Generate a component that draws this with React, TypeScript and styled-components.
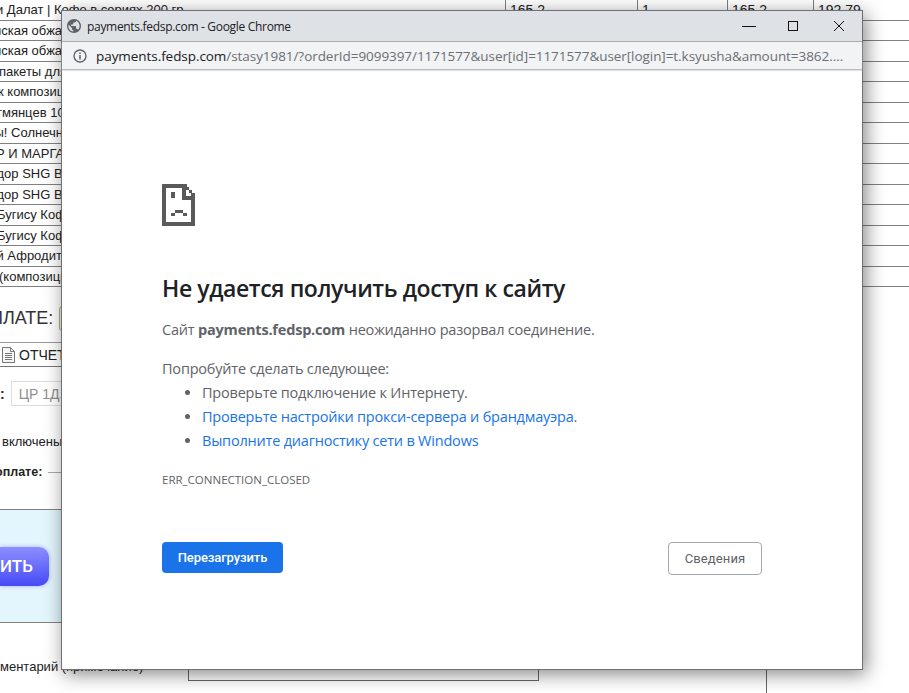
import styled, { createGlobalStyle } from "styled-components"

const GlobalStyle = createGlobalStyle`
    html, body {
        margin: 0;
        padding: 0;
        background: #fff;
    }
`

const Page = styled.div`
    position: relative;
    width: 909px;
    height: 693px;
    overflow: hidden;
    background: #fff;
    color: #222;
    font-family: "Liberation Sans", Arial, sans-serif;
    font-size: 13px;
`

/* page behind the popup */
const OrderTable = styled.div`
    display: flex;
    flex-direction: column;
    border-top: 1px solid #808080;
    margin-top: -1px;
`
const OrderRow = styled.div`
    display: grid;
    grid-template-columns: 505px 132px 90px 86px 96px;
    height: 20.5px;
    box-sizing: border-box;
    border-bottom: 1px solid #808080;
`
const NameCell = styled.div<{ $shift: number }>`
    margin-left: ${(p) => p.$shift}px;
    line-height: 20px;
    white-space: nowrap;
    overflow: hidden;
`
const ValueCell = styled.div`
    padding-left: 4px;
    line-height: 20px;
    font-size: 14px;
    border-left: 1px solid #808080;
`
const PayLine = styled.div`
    display: flex;
    align-items: center;
    gap: 6px;
    height: 25px;
    margin-top: 19px;
    margin-left: -10px;
    font-size: 18px;
    color: #333;
`
const PayInput = styled.div`
    width: 120px;
    height: 25px;
    box-sizing: border-box;
    background: #f5f1d8;
    border: 1px solid #b3ae8c;
    border-radius: 3px;
`
const ReportBar = styled.div`
    display: flex;
    align-items: center;
    gap: 3px;
    width: 300px;
    height: 25px;
    box-sizing: border-box;
    margin-top: 11px;
    padding-left: 1px;
    border-top: 1px solid #999;
    border-bottom: 1px solid #777;
    font-size: 14px;
    color: #222;
`
const FieldRow = styled.div`
    display: flex;
    align-items: center;
    gap: 6px;
    height: 25px;
    margin-top: 14px;
    font-size: 14px;
    font-weight: 700;
`
const FieldInput = styled.input`
    width: 200px;
    height: 25px;
    box-sizing: border-box;
    padding: 0 7px;
    border: 1px solid #ddd;
    font-family: inherit;
    font-size: 14px;

    &::placeholder {
        color: #8e8e8e;
    }
`
const IncludedLine = styled.div`
    margin-top: 28px;
    padding-left: 2px;
    line-height: 16px;
`
const PaidLine = styled.div`
    display: flex;
    align-items: center;
    gap: 6px;
    margin-top: 14px;
    margin-left: -5px;
    line-height: 16px;
    font-size: 12.5px;
    font-weight: 700;
`
const PaidDash = styled.div`
    width: 40px;
    height: 1px;
    background: #aaa;
`
const PayPanel = styled.div`
    display: flex;
    align-items: center;
    width: 500px;
    height: 114px;
    box-sizing: border-box;
    margin-top: 29px;
    background: #e3f5fd;
    border-top: 1px solid #808080;
    border-bottom: 1px solid #808080;
`
const PayButton = styled.div`
    display: flex;
    align-items: center;
    justify-content: flex-end;
    width: 49px;
    height: 39px;
    padding-right: 16px;
    box-sizing: border-box;
    border-radius: 0 10px 10px 0;
    background: linear-gradient(#8c8fff, #474af5);
    box-shadow: 0 0 4px #a9abff;
    color: #fff;
    font-size: 17px;
    font-weight: 500;
    font-family: Roboto, sans-serif;
    white-space: nowrap;
`
const CommentRow = styled.div`
    display: flex;
    height: 70px;
`
const CommentLabel = styled.div`
    width: 188px;
    flex: none;
    padding-top: 36px;
    line-height: 16px;
    white-space: nowrap;
`
const CommentBox = styled.div`
    width: 351px;
    height: 58px;
    flex: none;
    box-sizing: border-box;
    border: 1px solid #666;
`
const RightColumn = styled.div`
    width: 1px;
    height: 70px;
    flex: none;
    margin-left: 227px;
    background: #666;
`

/* popup window */
const ChromeWindow = styled.div`
    position: absolute;
    left: 61px;
    top: 10px;
    width: 802px;
    height: 660px;
    box-sizing: border-box;
    display: flex;
    flex-direction: column;
    background: #fff;
    border: 1px solid #6e7073;
    box-shadow: 3px 4px 18px rgba(0, 0, 0, 0.48);
    font-family: "Open Sans", sans-serif;
`
const TitleBar = styled.div`
    display: flex;
    align-items: center;
    height: 30px;
    flex: none;
    padding-left: 5px;
    background: #dee1e6;
    border-bottom: 1px solid #a8abaf;
    color: #202124;
`
const TitleText = styled.div`
    margin-left: 6px;
    font-size: 12px;
    letter-spacing: -0.31px;
    white-space: nowrap;
`
const WindowControls = styled.div`
    display: flex;
    align-items: center;
    gap: 36px;
    margin-left: auto;
    margin-right: 18px;
`
const MinimizeIcon = styled.svg`
    margin-right: -4px;
`
const AddressBar = styled.div`
    display: flex;
    align-items: center;
    height: 27px;
    flex: none;
    padding-left: 11px;
    background: #f1f3f4;
    border-bottom: 1px solid #b9bbbd;
    box-shadow: 0 1px 1px #e4e4e4;
`
const UrlText = styled.div`
    margin-left: 9px;
    font-size: 13.5px;
    letter-spacing: -0.06px;
    white-space: nowrap;
    color: #6b6f74;
`
const UrlHost = styled.span`
    color: #202124;
`
const ErrorBody = styled.div`
    display: flex;
    flex-direction: column;
    flex: 1;
    padding: 114px 100px 0 100px;
    color: #5f6368;
    font-size: 14.5px;
    letter-spacing: -0.2px;
`
const SadIcon = styled.svg`
    display: block;
    flex: none;
`
const Heading = styled.h1`
    margin: 45px 0 0;
    font-size: 23px;
    font-weight: 600;
    line-height: 34px;
    letter-spacing: -0.4px;
    color: #202124;
`
const Summary = styled.p`
    margin: 13px 0 0;
    line-height: 24px;
`
const SuggestTitle = styled.p`
    margin: 15px 0 0;
    line-height: 24px;
`
const SuggestList = styled.ul`
    margin: 0;
    padding-left: 40px;
    line-height: 24px;
`
const SuggestLink = styled.span`
    color: #1a73e8;
`
const ErrorCode = styled.div`
    margin-top: 18px;
    font-size: 11.5px;
    line-height: 18px;
    letter-spacing: 0;
`
const ActionRow = styled.div`
    display: flex;
    justify-content: space-between;
    align-items: flex-start;
    margin-top: 53px;
    font-family: Roboto, sans-serif;
`
const ReloadButton = styled.button`
    width: 121px;
    height: 31px;
    padding: 0;
    border: none;
    border-radius: 4px;
    background: #1a73e8;
    color: #fff;
    font-family: inherit;
    font-size: 13px;
    font-weight: 500;
    letter-spacing: -0.1px;
`
const DetailsButton = styled.button`
    width: 94px;
    height: 33px;
    padding: 0;
    border: 1px solid #a5a8ac;
    border-radius: 4px;
    background: #fff;
    color: #5f6368;
    font-family: inherit;
    font-size: 13px;
    font-weight: 400;
    letter-spacing: 0.1px;
`

const ROWS: [string, number][] = [
    ["и Далат | Кофе в сериях 200 гр", -4],
    ["иская обжарка", -6],
    ["иская обжарка", -6],
    ["пакеты для", -1],
    ["к композиции", -2],
    ["тмянцев 10", -4],
    ["ы! Солнечный", -5.5],
    ["Р И МАРГАРИТ", -4],
    ["дор SHG В", -3.5],
    ["дор SHG В", -3.5],
    ["Бугису Кофе", -3],
    ["Бугису Кофе", -3],
    ["й Афродита", -3.5],
    ["(композиция", -1],
]

function SadFace() {
    return (
        <SadIcon width="33" height="42" viewBox="0 0 33 42" fill="#5a5a5a">
            <rect x="0" y="0" width="4" height="42" />
            <rect x="0" y="0" width="25" height="4" />
            <rect x="0" y="38" width="33" height="4" />
            <rect x="29" y="12" width="4" height="30" />
            <rect x="20" y="0" width="4" height="16" />
            <rect x="20" y="12" width="13" height="4" />
            <rect x="24" y="3" width="3" height="3" />
            <rect x="27" y="6" width="3" height="3" />
            <rect x="29" y="9" width="4" height="3" />
            <rect x="9" y="8" width="4" height="6" />
            <rect x="13" y="26" width="8" height="3" />
            <rect x="9" y="29" width="4" height="3" />
            <rect x="21" y="29" width="4" height="3" />
        </SadIcon>
    )
}

export default function App() {
    return (
        <Page>
            <GlobalStyle />

            <OrderTable>
                {ROWS.map(([name, shift], order) => (
                    <OrderRow key={order}>
                        <NameCell $shift={shift}>{name}</NameCell>
                        <ValueCell>{order === 0 && "165.2"}</ValueCell>
                        <ValueCell>{order === 0 && "1"}</ValueCell>
                        <ValueCell>{order === 0 && "165.2"}</ValueCell>
                        <ValueCell>{order === 0 && "192.79"}</ValueCell>
                    </OrderRow>
                ))}
            </OrderTable>

            <PayLine>
                ПЛАТЕ:
                <PayInput />
            </PayLine>
            <ReportBar>
                <svg width="15" height="16" viewBox="0 0 15 16" fill="none" stroke="#777">
                    <path d="M1.5 .5h8l4 4v11h-12z" fill="#f6f6f6" />
                    <path d="M9.5 .5v4h4M4 6.5h7M4 8.5h7M4 10.5h7M4 12.5h7" />
                </svg>
                ОТЧЕТ
            </ReportBar>
            <FieldRow>
                :
                <FieldInput placeholder="ЦР 1Дз" readOnly />
            </FieldRow>
            <IncludedLine>включены</IncludedLine>
            <PaidLine>
                оплате:
                <PaidDash />
            </PaidLine>
            <PayPanel>
                <PayButton>ТИТЬ</PayButton>
            </PayPanel>
            <CommentRow>
                <CommentLabel>ментарий (примечание)</CommentLabel>
                <CommentBox />
                <RightColumn />
            </CommentRow>

            <ChromeWindow>
                <TitleBar>
                    <svg width="14" height="14" viewBox="2 2 20 20" fill="#5f6368">
                        <path d="M12 2C6.48 2 2 6.48 2 12s4.48 10 10 10 10-4.48 10-10S17.52 2 12 2zm-1 17.93c-3.95-.49-7-3.85-7-7.93 0-.62.08-1.21.21-1.79L9 15v1c0 1.1.9 2 2 2v1.93zm6.9-2.54c-.26-.81-1-1.39-1.9-1.39h-1v-3c0-.55-.45-1-1-1H8v-2h2c.55 0 1-.45 1-1V7h2c1.1 0 2-.9 2-2v-.41c2.93 1.19 5 4.06 5 7.41 0 2.08-.8 3.97-2.1 5.39z" />
                    </svg>
                    <TitleText>payments.fedsp.com - Google Chrome</TitleText>
                    <WindowControls>
                        <MinimizeIcon width="14" height="10" viewBox="0 0 14 10" stroke="#111">
                            <path d="M0 5.5h14" />
                        </MinimizeIcon>
                        <svg width="10" height="10" viewBox="0 0 10 10" fill="none" stroke="#111">
                            <rect x=".5" y=".5" width="9" height="9" />
                        </svg>
                        <svg width="10" height="10" viewBox="0 0 10 10" stroke="#111">
                            <path d="M0 0l10 10M10 0L0 10" />
                        </svg>
                    </WindowControls>
                </TitleBar>
                <AddressBar>
                    <svg width="14" height="14" viewBox="0 0 14 14" fill="none" stroke="#5f6368">
                        <circle cx="7" cy="7" r="6" strokeWidth="1.4" />
                        <path d="M7 6v4.5M7 3.5v1.5" strokeWidth="1.5" />
                    </svg>
                    <UrlText>
                        <UrlHost>payments.fedsp.com</UrlHost>
                        /stasy1981/?orderId=9099397/1171577&amp;user[id]=1171577&amp;user[login]=t.ksyusha&amp;amount=3862....
                    </UrlText>
                </AddressBar>
                <ErrorBody>
                    <SadFace />
                    <Heading>Не удается получить доступ к сайту</Heading>
                    <Summary>
                        Сайт <b>payments.fedsp.com</b> неожиданно разорвал соединение.
                    </Summary>
                    <SuggestTitle>Попробуйте сделать следующее:</SuggestTitle>
                    <SuggestList>
                        <li>Проверьте подключение к Интернету.</li>
                        <li>
                            <SuggestLink>Проверьте настройки прокси-сервера и брандмауэра</SuggestLink>.
                        </li>
                        <li>
                            <SuggestLink>Выполните диагностику сети в Windows</SuggestLink>
                        </li>
                    </SuggestList>
                    <ErrorCode>ERR_CONNECTION_CLOSED</ErrorCode>
                    <ActionRow>
                        <ReloadButton>Перезагрузить</ReloadButton>
                        <DetailsButton>Сведения</DetailsButton>
                    </ActionRow>
                </ErrorBody>
            </ChromeWindow>
        </Page>
    )
}
